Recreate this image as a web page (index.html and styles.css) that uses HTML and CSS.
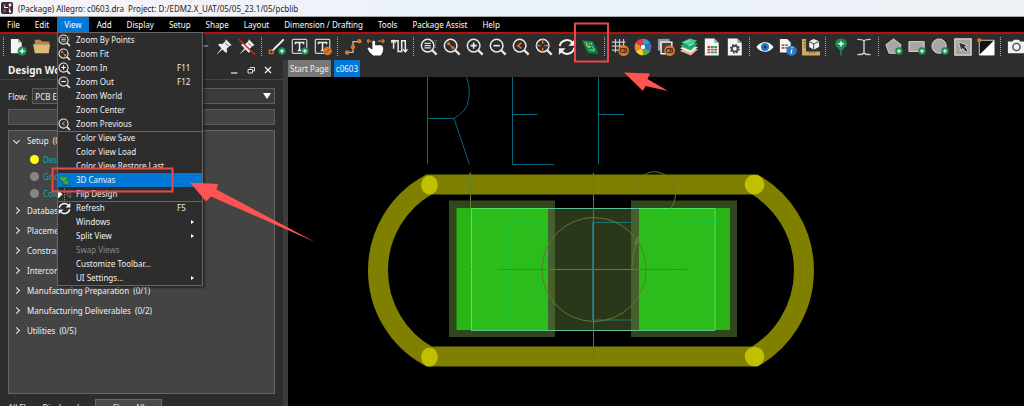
FILE: index.html
```html
<!DOCTYPE html>
<html lang="en">
<head>
  <meta charset="UTF-8" />
  <meta name="viewport" content="width=device-width, initial-scale=1.0"/>
  <title>(Package) Allegro: c0603.dra</title>
  <link rel="stylesheet" href="styles.css">
</head>
<body>

  <!-- shared icons -->
  <svg class="sprite" aria-hidden="true">
    <symbol id="plus-badge" viewBox="0 0 10 10">
      <circle cx="5" cy="5" r="4.6" fill="#1c8f50"/>
      <path d="M5 2.4v5.2M2.4 5h5.2" stroke="#fff" stroke-width="1.3"/>
    </symbol>
    <symbol id="orange-badge" viewBox="0 0 10 10">
      <circle cx="5" cy="5" r="5" fill="#d9782a"/>
      <rect x="2" y="3.2" width="6" height="3.6" rx="1.6" fill="none" stroke="#4a2a12"/>
      <circle cx="5.8" cy="5" r="1" fill="#4a2a12"/>
    </symbol>
    <symbol id="lens" viewBox="0 0 20 20">
      <circle cx="8.5" cy="8.5" r="7" fill="none" stroke="#e8e8e8" stroke-width="1.7"/>
      <path d="M13.6 13.6L18.5 18.5" stroke="#e8e8e8" stroke-width="2.6"/>
    </symbol>
    <symbol id="zoom-points" viewBox="0 0 20 20">
      <use href="#lens"/>
      <path d="M5 6h7M5 8.5h7M5 11h7" stroke="#ddd" stroke-width="1.2"/>
      <path d="M16 3h3M17 5.5h2M17 8h2M17 10.5h2" stroke="#aaa" stroke-dasharray="1 1"/>
    </symbol>
    <symbol id="zoom-fit" viewBox="0 0 20 20">
      <use href="#lens"/>
      <path d="M6 6l5 5" stroke="#d9782a" stroke-width="1.4"/>
      <path d="M4.8 4.8h3v3h-3zM9.5 9.5h3v3h-3z" fill="#d9782a"/>
    </symbol>
    <symbol id="zoom-in" viewBox="0 0 20 20">
      <use href="#lens"/>
      <path d="M8.5 5v7M5 8.5h7" stroke="#eee" stroke-width="1.8"/>
    </symbol>
    <symbol id="zoom-out" viewBox="0 0 20 20">
      <use href="#lens"/>
      <path d="M5 8.5h7" stroke="#eee" stroke-width="1.8"/>
    </symbol>
    <symbol id="zoom-prev" viewBox="0 0 20 20">
      <use href="#lens"/>
      <path d="M10.5 5.5l-4 3 4 3" fill="none" stroke="#d9782a" stroke-width="1.8"/>
    </symbol>
    <symbol id="zoom-center" viewBox="0 0 20 20">
      <use href="#lens"/>
      <path d="M8.5 1.5v5M8.5 10.5v5M1.5 8.5h5M10.5 8.5h5" stroke="#d9782a" stroke-width="1.6"/>
    </symbol>
    <symbol id="refresh" viewBox="0 0 20 20">
      <path d="M2 9A8 7.5 0 0 1 16 5M18 11A8 7.5 0 0 1 4 15" fill="none" stroke="#f2f2f2" stroke-width="2.2"/>
      <path d="M19 1v7.5h-7.500zM1 19v-7.5h7.5z" fill="#f2f2f2"/>
    </symbol>
    <symbol id="board" viewBox="0 0 20 20">
      <path d="M1 2.5L13 3.500l6.5 14-12-1z" fill="#16834a"/>
      <path d="M7.5 16.5l12 1v1l-12-1z" fill="#0b5a30"/>
      <path d="M4 5h3M8 6l4 1M6 8l3 3M12 9l3 4M9 13l4 1" stroke="#5fd08b" stroke-width="1.2"/>
      <path d="M8 8.5h2.5v2H8zM11 5h1.5v1.5H11z" fill="#d8cf4a"/>
      <path d="M5.5 6.5H7V8H5.500zM13 13h1.5v1.5H13z" fill="#b8e6d4"/>
    </symbol>
    <symbol id="flip" viewBox="0 0 20 20">
      <path d="M0 3l7 6.5L0 16z" fill="#fff"/>
      <path d="M10 1v18" stroke="#999" stroke-width="1.5" stroke-dasharray="2 2"/>
      <path d="M19 4l-6 5.5 6 5.5z" fill="none" stroke="#999"/>
    </symbol>
    <symbol id="page" viewBox="0 0 20 20">
      <path d="M2 .5h10.5l5 5v14H2z" fill="#f4f4f4"/>
      <path d="M12.5 .5v5h5z" fill="#aaa"/>
    </symbol>
    <symbol id="pushpin" viewBox="0 0 20 20">
      <path d="M12 1.5l6.5 6.5-2 .5-3.5 3.5.5 3.5-1.5 1-3.800-3.800L1.500 18.500 7.200 11.500 3.500 7.800l1.200-1.500 3.500.5L11.500 3.500z" fill="#eee"/>
      <path d="M11.5 5.5l3.5 3.5" stroke="#555"/>
    </symbol>
    <symbol id="text-box" viewBox="0 0 20 20">
      <rect x="1.5" y="1.5" width="16" height="15.5" rx="1" fill="none" stroke="#ccc" stroke-width="1.4"/>
      <path d="M5 7V5h9v2M9.500 5v9M7.500 14h4" fill="none" stroke="#eee" stroke-width="1.7"/>
    </symbol>
    <symbol id="table-page" viewBox="0 0 20 20">
      <use href="#page"/>
      <path d="M5 10h3M5 13h3M5 16h3M12.500 13h3" stroke="#d8303c" stroke-width="2"/>
      <path d="M8.800 10h3M12.500 10h3M8.800 13h3M8.800 16h3M12.500 16h3" stroke="#24935a" stroke-width="2"/>
    </symbol>
  </svg>

  <header class="title-bar">
    <svg class="app-icon" viewBox="0 0 12 12" aria-hidden="true">
      <rect width="12" height="12" rx="2" fill="#2b3040"/>
      <path d="M3.5 2v3.5h5V10M8.5 2.5v2M3.5 7.5V10" stroke="#fff" fill="none"/>
      <path d="M2 2h3v2H2zM7 5h3v2H7zM2 8h3v2H2z" fill="#d42a3f"/>
      <circle cx="9" cy="3" r="1.4" fill="#fff"/><circle cx="9" cy="9.5" r="1.2" fill="#fff"/>
    </svg>
    <span>(Package) Allegro: c0603.dra&nbsp; Project: D:/EDM2.X_UAT/05/05_23.1/05/pcblib</span>
  </header>

  <nav class="menu-bar">
    <button>File</button>
    <button>Edit</button>
    <button class="open" aria-expanded="true">View</button>
    <button>Add</button>
    <button>Display</button>
    <button>Setup</button>
    <button>Shape</button>
    <button>Layout</button>
    <button>Dimension / Drafting</button>
    <button>Tools</button>
    <button>Package Assist</button>
    <button>Help</button>
  </nav>

  <div class="toolbar" role="toolbar" aria-label="Tools">
    <span class="handle"></span>
    <button aria-label="New"><svg viewBox="0 0 20 20"><path d="M1 1h8l4 4v12H1z" fill="#f4f4f4"/><path d="M9 1v4h4z" fill="#999"/><use href="#plus-badge" x="8" y="9" width="11" height="11"/></svg></button>
    <button aria-label="Open"><svg viewBox="0 0 20 20"><path d="M2 2h6l2 2h8v3H2z" fill="#b98a4e"/><path d="M0 7h19l-1.5 10H2z" fill="#deb877"/></svg></button>
    <button aria-label="Save"><svg viewBox="0 0 20 20"><path d="M2 2h16v16H2z" fill="#eee"/></svg></button>
    <button aria-label="Move"></button>
    <button aria-label="Copy"></button>
    <button aria-label="Delete"></button>
    <button aria-label="Undo"></button>
    <button aria-label="Redo"></button>
    <span class="handle"></span>
    <span class="caret"></span>
    <button aria-label="Fix"><svg><use href="#pushpin"/></svg></button>
    <button aria-label="Unfix"><svg viewBox="0 0 20 20"><use href="#pushpin"/><path d="M1 1.5l18 17" stroke="#cf2630" stroke-width="1.6"/></svg></button>
    <span class="handle"></span>
    <button aria-label="Add line"><svg viewBox="0 0 20 20"><path d="M4 15L17.5 1.5" stroke="#f2f2f2" stroke-width="2.2"/><path d="M1.5 13.5h4v4h-4z" fill="#5a3010" stroke="#d9782a" stroke-width="1.3"/><use href="#plus-badge" x="11" y="10" width="9" height="9"/></svg></button>
    <button aria-label="Add text"><svg viewBox="0 0 20 20"><use href="#text-box"/><use href="#plus-badge" x="11" y="10" width="9" height="9"/></svg></button>
    <button aria-label="Edit text"><svg viewBox="0 0 20 20"><use href="#text-box"/><circle cx="15" cy="14.5" r="4.800" fill="#d9782a"/><path d="M12.500 17l5-5" stroke="#7a3c10"/></svg></button>
    <span class="handle"></span>
    <button aria-label="Route"><svg viewBox="0 0 20 20"><path d="M3 16h7V4h7" fill="none" stroke="#bbb" stroke-width="1.5"/><circle cx="3.5" cy="16" r="2.5" fill="#d9782a"/><circle cx="10" cy="10" r="2.5" fill="#d9782a"/><circle cx="17" cy="3.5" r="2.5" fill="#d9782a"/></svg></button>
    <button aria-label="Slide"><svg viewBox="0 0 20 20"><path d="M7 19.5c-2-2-5-4-6.5-8.5l2-.5L6 13V4.500c0-2 3-2 3 0V8h6c2 0 3 1.500 3 3.500 0 3-1 6-3 8z" fill="#fff"/><path d="M0 3.500h5M12 3.500h7M2 1.500l-2 2 2 2M17 1.500l2 2-2 2" fill="none" stroke="#d9782a" stroke-width="1.5"/></svg></button>
    <button aria-label="Delay tune"><svg viewBox="0 0 20 20"><path d="M4 12V3M1 3h8v12h4V3h4v12" fill="none" stroke="#e8e8e8" stroke-width="1.7"/><path d="M1.5 5.500L4 2.500l2.500 3M14.500 12.500l2.500 3 2.500-3" fill="none" stroke="#e8e8e8" stroke-width="1.4"/></svg></button>
    <span class="handle"></span>
    <button aria-label="Zoom By Points"><svg><use href="#zoom-points"/></svg></button>
    <button aria-label="Zoom Fit"><svg><use href="#zoom-fit"/></svg></button>
    <button aria-label="Zoom In"><svg><use href="#zoom-in"/></svg></button>
    <button aria-label="Zoom Out"><svg><use href="#zoom-out"/></svg></button>
    <button aria-label="Zoom Previous"><svg><use href="#zoom-prev"/></svg></button>
    <button aria-label="Zoom Center"><svg><use href="#zoom-center"/></svg></button>
    <button aria-label="Refresh"><svg><use href="#refresh"/></svg></button>
    <button aria-label="3D Canvas"><svg><use href="#board"/></svg></button>
    <span class="handle"></span>
    <button aria-label="Grid"><svg viewBox="0 0 20 20"><path d="M5 1v15M9.500 1v15M14 1v9M1 4.500h15M1 9h15M1 13.500h9" stroke="#ccc" stroke-width="1.3"/><use href="#orange-badge" x="8" y="8" width="12" height="12"/></svg></button>
    <button aria-label="Color"><svg viewBox="-10 -10 20 20"><g fill="none" stroke-width="6.5"><path d="M0-6A6 6 0 0 1 5.200-3" stroke="#2f9fd0"/><path d="M5.200-3A6 6 0 0 1 5.200 3" stroke="#3a6fd0"/><path d="M5.200 3A6 6 0 0 1 0 6" stroke="#4fb04c"/><path d="M0 6A6 6 0 0 1-5.200 3" stroke="#f4cf3a"/><path d="M-5.200 3A6 6 0 0 1-5.200-3" stroke="#f08a28"/><path d="M-5.200-3A6 6 0 0 1 0-6" stroke="#e03a48"/></g><circle r="2.6" fill="#f6f6f6"/></svg></button>
    <button aria-label="Shadow"><svg viewBox="0 0 20 20"><path d="M1 1h13v13H1z" fill="#999"/><path d="M4.500 4.500h12v13h-12z" fill="#444" stroke="#fff" stroke-width="1.5"/><use href="#orange-badge" x="8" y="8" width="12" height="12"/></svg></button>
    <button aria-label="Layers"><svg viewBox="0 0 20 20"><path d="M0 14.500L7 10l13 2.500-8 7z" fill="#f0b48c"/><path d="M0 11.500L7 8l13 2-8 6.500z" fill="#eee"/><path d="M0 9l7-5 13 2-8 8z" fill="#20a56d"/><path d="M1 5l10-4.500L19 3l-7 5.500z" fill="#3fcf94"/><path d="M5 5l6-2M9 9l6-3" stroke="#bff0d8"/></svg></button>
    <button aria-label="Report"><svg><use href="#table-page"/></svg></button>
    <button aria-label="Parameters"><svg viewBox="0 0 20 20"><use href="#page"/><circle cx="9.8" cy="12" r="3.2" fill="none" stroke="#444" stroke-width="2"/><circle cx="9.8" cy="12" r="4.6" fill="none" stroke="#444" stroke-width="1.8" stroke-dasharray="1.8 1.81"/></svg></button>
    <span class="handle"></span>
    <button aria-label="Show"><svg viewBox="0 0 20 20"><path d="M.5 10C5 3 15 3 19.500 10 15 17 5 17 .5 10z" fill="#fff"/><circle cx="10" cy="10" r="4.5" fill="#2f78c4"/><circle cx="10" cy="10" r="1.8" fill="#173a66"/></svg></button>
    <button aria-label="Info"><svg viewBox="0 0 20 20"><path d="M1 1h8l4 4v11H1z" fill="#f4f4f4"/><path d="M3 8h3M3 11h3" stroke="#d8303c" stroke-width="1.8"/><path d="M7 8h3M7 11h3" stroke="#24935a" stroke-width="1.8"/><circle cx="14" cy="14" r="5.8" fill="#2f78c4"/><path d="M14.500 10v1.500M14.200 13l-.7 4" stroke="#fff" stroke-width="1.4"/></svg></button>
    <button aria-label="Measure"><svg viewBox="0 0 20 20"><path d="M0 1h4.500v14H20v4.500H0z" fill="#d6a75f"/><path d="M2 4h2M2 7h2M2 10h2M8 15v2M11 15v2M14 15v2" stroke="#6b4b1c"/><path d="M13 1l6 2.500v6.500l-6 3-5-3V3.500z" fill="#eee"/><path d="M8 4l5 2.500L19 4M13 6.500V13" fill="none" stroke="#333"/></svg></button>
    <span class="handle"></span>
    <button aria-label="Add pin"><svg viewBox="0 0 20 20"><path d="M10 12v7.500" stroke="#1c8f50" stroke-width="1.5"/><path d="M10 15C8 12 3.500 10 3.500 6.500a6.500 6 0 0 1 13 0C16.500 10 12 12 10 15z" fill="#1c8f50"/><path d="M10 3.500v6M7 6.500h6" stroke="#fff" stroke-width="1.7"/></svg></button>
    <button aria-label="Text size"><svg viewBox="0 0 20 20"><path d="M2.500 1.500c4 0 6.500 0 7.500 2 1-2 3.500-2 7.500-2M2.500 18.500c4 0 6.500 0 7.500-2 1 2 3.500 2 7.500 2M10 3v14" fill="none" stroke="#ccc" stroke-width="1.6"/></svg></button>
    <span class="handle"></span>
    <button aria-label="Add polygon"><svg viewBox="0 0 20 20"><path d="M9.500 1L18 7.500 15 17H4.500L1 7.500z" fill="#aaa6a3" stroke="#ddd"/><use href="#plus-badge" x="11" y="10" width="9" height="9"/></svg></button>
    <button aria-label="Add rectangle"><svg viewBox="0 0 20 20"><path d="M1 4h17v11H1z" fill="#aaa6a3" stroke="#ddd"/><use href="#plus-badge" x="11" y="10" width="9" height="9"/></svg></button>
    <button aria-label="Add circle"><svg viewBox="0 0 20 20"><circle cx="9" cy="9" r="8" fill="#aaa6a3" stroke="#ddd"/><use href="#plus-badge" x="11" y="10" width="9" height="9"/></svg></button>
    <button aria-label="Select shape"><svg viewBox="0 0 20 20"><path d="M1 1h18v18H1z" fill="#a5a2a0" stroke="#ddd" stroke-width="1.5"/><path d="M5 4.500l10 3.500-3 1.500 3.500 4-2 2-4-4-1.500 3z" fill="#333" stroke="#eee" stroke-width=".8"/></svg></button>
    <button aria-label="Void shape"><svg viewBox="0 0 20 20"><path d="M2.500 2.500h16.500v16.500H2.500z" fill="#111" stroke="#ddd"/><path d="M19 2.500V19H2.500z" fill="#fff"/><path d="M.5 .5h4v4h-4z" fill="#d9782a"/></svg></button>
    <span class="handle"></span>
    <button aria-label="Snapshot"><svg viewBox="0 0 20 20"><path d="M1 4h5l2-2h5l2 2h5v13H1z" fill="#f2f2f2"/><circle cx="10.5" cy="10" r="4" fill="none" stroke="#444" stroke-width="1.5"/></svg></button>
  </div>

  <main class="workspace">
    <aside class="dock">
      <div class="dock-title">
        <h1>Design Workflow</h1>
        <button aria-label="Minimize"><svg viewBox="0 0 8 8"><path d="M1 7h6.500" stroke="#ddd" stroke-width="1.3"/></svg></button>
        <button aria-label="Float"><svg viewBox="0 0 8 8"><path d="M3 2.500V1.500h4.500V5H6M1 3.500h4.500V7H1z" fill="none" stroke="#ddd"/></svg></button>
        <button aria-label="Close"><svg viewBox="0 0 8 8"><path d="M1 1l6 6M7 1L1 7" stroke="#eee" stroke-width="1.3"/></svg></button>
      </div>
      <div class="dock-body">
        <div class="flow-row">
          <label for="flow">Flow:</label>
          <div class="select-wrap">
            <select id="flow"><option>PCB Editor</option></select>
          </div>
        </div>
        <button class="wide-button" aria-label="Edit flow"></button>
        <ul class="tree">
          <li class="expanded">Setup&nbsp; (0/3)
            <ul>
              <li class="current"><a href="#">Design Parameters</a></li>
              <li><a href="#">Grids</a></li>
              <li><a href="#">Colors</a></li>
            </ul>
          </li>
          <li>Database Preparation&nbsp; (0/4)</li>
          <li>Placement&nbsp; (0/2)</li>
          <li>Constraints&nbsp; (0/3)</li>
          <li>Interconnect&nbsp; (0/3)</li>
          <li>Manufacturing Preparation&nbsp; (0/1)</li>
          <li>Manufacturing Deliverables&nbsp; (0/2)</li>
          <li>Utilities&nbsp; (0/5)</li>
        </ul>
        <div class="dock-footer">
          <span>All Flows Displayed:</span>
          <button>Show All</button>
        </div>
      </div>
    </aside>

    <section class="editor">
      <div class="tabs">
        <button>Start Page</button>
        <button class="active">c0603</button>
      </div>
      <svg class="canvas" viewBox="288 77 736 329" preserveAspectRatio="xMinYMin slice">
        <!-- reference text, top -->
        <g class="ref-text">
          <path d="M427.5 77v87.5M427.5 118.5H454L469.500 164.500M454 118.500C463 113 466 108 467.500 104C470 93 470 88 466.500 77"/>
          <path d="M512.5 77v87.5h41.5M512.500 114.500H537.500"/>
          <path d="M598.5 77v87.5M598.500 114.500H624"/>
        </g>
        <!-- pads and body -->
        <path class="mask" d="M449 200.500h106v136.500H449zM631 200.500h106v136.500H631z"/>
        <path class="body-fill" d="M471 208h244v122.500H471z"/>
        <path class="mask-overlap" d="M548 208h7v122.500h-7zM631 208h8v122.500h-8z"/>
        <path class="pad" d="M456.500 208H548v122h-91.500zM639 208h91v122h-91z"/>
        <path class="pad-overlap" d="M471 208h77v122h-77zM639 208h76v122h-76z"/>
        <path class="body-line" d="M548 208.500h91M471 330.500h244"/>
        <path class="body-line bright" d="M548 208.500h-76.500v121.500M639 208.500h76v121.500"/>
        <!-- keepout outline -->
        <path class="outline" d="M429 184.500H755A100 100 0 0 1 755 356.500H429A98 98 0 0 1 429 184.500z"/>
        <g class="vertex">
          <ellipse cx="429.500" cy="185" rx="8.300" ry="9.500"/>
          <ellipse cx="429.500" cy="357" rx="8.300" ry="9.500"/>
          <circle cx="754.500" cy="184.500" r="9.800"/>
          <circle cx="754.500" cy="356.500" r="9.800"/>
        </g>
        <!-- assembly text -->
        <g class="green-text">
          <path d="M508.500 319v-96.500H535Q545 226 548 233M508.500 273.500H534L548 262M534 273.500L548 314M679.500 319v-96.500H719M679.500 269.500H704M459 269.500h26"/>
          <path d="M671 208C655 222 640 228 635 245"/>
        </g>
        <path class="teal-text" d="M548 233Q551 245 548 260M548 314l2 5M635 222.500H592.500V320H635"/>
        <g class="cross">
          <path d="M593.500 172.500V364M498 269.500H689M470.500 172.500V208M470.500 172.500L459 190"/>
          <circle cx="594" cy="269.500" r="52"/>
          <path d="M634 189C641 171 655 168 667 176C678 186 677 200 671 208M638 240C634 248 632 258 632 269"/>
        </g>
      </svg>
    </section>
  </main>

  <div class="dropdown" role="menu" aria-label="View">
    <button><svg><use href="#zoom-points"/></svg><span>Zoom By Points</span></button>
    <button><svg><use href="#zoom-fit"/></svg><span>Zoom Fit</span></button>
    <button><svg><use href="#zoom-in"/></svg><span>Zoom In</span><kbd>F11</kbd></button>
    <button><svg><use href="#zoom-out"/></svg><span>Zoom Out</span><kbd>F12</kbd></button>
    <button><i></i><span>Zoom World</span></button>
    <button><i></i><span>Zoom Center</span></button>
    <button><svg><use href="#zoom-prev"/></svg><span>Zoom Previous</span></button>
    <hr>
    <button><i></i><span>Color View Save</span></button>
    <button><i></i><span>Color View Load</span></button>
    <button><i></i><span>Color View Restore Last</span></button>
    <hr>
    <button class="selected"><svg><use href="#board"/></svg><span>3D Canvas</span></button>
    <button><svg><use href="#flip"/></svg><span>Flip Design</span></button>
    <hr>
    <button><svg><use href="#refresh"/></svg><span>Refresh</span><kbd>F5</kbd></button>
    <button class="submenu"><i></i><span>Windows</span></button>
    <button class="submenu"><i></i><span>Split View</span></button>
    <button disabled><i></i><span>Swap Views</span></button>
    <button><i></i><span>Customize Toolbar...</span></button>
    <button class="submenu"><i></i><span>UI Settings...</span></button>
  </div>

  <!-- callouts -->
  <svg class="callouts" viewBox="0 0 1024 406" aria-hidden="true">
    <rect x="575" y="23.5" width="33" height="38"/>
    <rect x="52.5" y="168.5" width="120" height="23"/>
    <path d="M624 72.500L650 73.500L647.500 79L668 91L645.500 86L643 91z"/>
    <path d="M190 182.500L218 184L216.500 189.500L315 242L211 196.500L206 201.500z"/>
  </svg>

</body>
</html>
```
FILE: styles.css
```css
* {
  box-sizing: border-box;
}

body {
  margin: 0;
  height: 100vh;
  display: flex;
  flex-direction: column;
  overflow: hidden;
  position: relative;
  background: #2d2d2d;
  color: #f0f0f0;
  font-family: "Noto Sans", "Open Sans", sans-serif;
  font-size: 8px;
}

button {
  font: inherit;
  color: inherit;
  background: none;
  border: none;
  padding: 0;
  margin: 0;
  cursor: pointer;
}

.sprite {
  position: absolute;
  width: 0;
  height: 0;
}

/* title and menus */
.title-bar {
  flex: none;
  display: flex;
  align-items: center;
  gap: 5px;
  height: 17px;
  padding-left: 1px;
  background: linear-gradient(to right, #f6f3f6, #eaf2fa 50%, #eef2f6);
  border-bottom: 1px solid #a8a8a8;
  color: #222;
}

.app-icon {
  width: 12px;
  height: 12px;
}

.menu-bar {
  flex: none;
  display: flex;
  gap: 1px;
  height: 15px;
  background: #000;
  color: #fff;
}

.menu-bar button {
  padding: 0 7px;
}

.menu-bar .open {
  background: #0078d7;
}

/* toolbar */
.toolbar {
  flex: none;
  display: flex;
  align-items: center;
  height: 28px;
  border-top: 2px solid #b50f0f;
  overflow: hidden;
}

.toolbar button {
  flex: none;
  width: 23px;
  height: 20px;
}

.toolbar svg {
  display: block;
  width: 18px;
  height: 18px;
  margin: 0 auto;
}

.handle {
  flex: none;
  width: 7px;
  height: 20px;
  background: repeating-linear-gradient(#b0b0b0 0 1px, #2d2d2d 1px 2px) center / 1px 100% no-repeat;
}

.caret {
  flex: none;
  width: 14px;
}

.caret::before {
  content: "";
  display: block;
  width: 4px;
  margin: 0 auto;
  border: 2px solid transparent;
  border-top-color: #777;
}

/* workflow panel */
.workspace {
  flex: 1;
  min-height: 0;
  display: flex;
}

.dock {
  flex: none;
  width: 288px;
  border-right: 5px solid #3c3c3c;
  overflow: hidden;
}

.dock-title {
  display: flex;
  align-items: center;
  gap: 9px;
  height: 20px;
  padding: 0 11px 0 8px;
  border-bottom: 1px solid #444;
}

.dock-title h1 {
  flex: 1;
  margin: 0;
  font-size: 10px;
}

.dock-title button {
  width: 8px;
  height: 8px;
}

.dock-title svg {
  display: block;
}

.dock-body {
  display: flex;
  flex-direction: column;
  gap: 5px;
  padding: 8px 8px 0;
}

.flow-row {
  display: flex;
  align-items: center;
  gap: 5px;
}

.select-wrap {
  flex: 1;
  position: relative;
}

.select-wrap::after {
  content: "";
  position: absolute;
  right: 4px;
  top: 5px;
  border: 4px solid transparent;
  border-top: 6px solid #fff;
  border-bottom: none;
}

.flow-row select {
  appearance: none;
  display: block;
  width: 100%;
  height: 16px;
  padding: 0 2px;
  border: 1px solid #5c5c5c;
  background: #3a3a3a;
  color: inherit;
  font: inherit;
}

.wide-button {
  height: 16px;
  background: #444;
  border: 1px solid #5c5c5c;
}

.tree {
  height: 264px;
  margin: 0;
  padding: 0 0 0 5px;
  list-style: none;
  background: #444;
  border: 1px solid #666;
}

.tree > li {
  position: relative;
  padding-left: 13px;
  line-height: 20px;
}

.tree > li::before {
  content: "";
  position: absolute;
  left: 0;
  top: 7px;
  width: 4px;
  height: 4px;
  border: solid #eee;
  border-width: 1px 1px 0 0;
  transform: rotate(45deg);
}

.tree > li.expanded::before {
  transform: rotate(135deg);
}

.tree ul {
  margin: 0 0 -1px;
  padding: 0 0 0 3px;
  list-style: none;
}

.tree ul li {
  display: flex;
  align-items: center;
  gap: 4px;
  line-height: 17px;
}

.tree ul li::before {
  content: "";
  width: 9px;
  height: 9px;
  border-radius: 50%;
  background: #858585;
}

.tree ul .current::before {
  background: #ff0;
}

.tree a {
  color: #12a5b5;
  text-decoration: none;
}

.dock-footer {
  display: flex;
  align-items: center;
  gap: 14px;
}

.dock-footer button {
  width: 67px;
  height: 17px;
  border: 1px solid #6a6a6a;
  background: #4a4a4a;
}

/* editor */
.editor {
  flex: 1;
  min-width: 0;
  display: flex;
  flex-direction: column;
}

.tabs {
  flex: none;
  display: flex;
  gap: 3px;
  height: 17px;
}

.tabs button {
  padding: 0 2px;
  background: #777;
}

.tabs .active {
  background: #0078d7;
}

.canvas {
  flex: 1;
  min-height: 0;
  width: 100%;
  background: #000;
  fill: none;
}

.ref-text { stroke: #056a82; }
.mask { fill: #30461c; }
.body-fill { fill: #2a371a; }
.mask-overlap { fill: #46602a; }
.pad { fill: #28b515; }
.pad-overlap { fill: #2cbc1c; }
.body-line { stroke: #5cc09a; }
.body-line.bright { stroke: #4ce85a; }
.outline { stroke: #808000; stroke-width: 20; }
.vertex { fill: #c0c000; }
.green-text { stroke: #1cc43c; }
.teal-text { stroke: #267272; }
.cross { stroke: #5a7c34; }

/* view menu */
.dropdown {
  position: absolute;
  left: 57px;
  top: 32px;
  width: 146px;
  background: #2d2d2d;
  border: 1px solid #666;
  box-shadow: 2px 2px 2px rgba(0, 0, 0, 0.4);
}

.dropdown button {
  display: flex;
  align-items: center;
  gap: 5px;
  width: 100%;
  height: 14px;
  padding: 0 11px 0 0;
  text-align: left;
  line-height: 14px;
}

.dropdown svg,
.dropdown i {
  flex: none;
  width: 13px;
  height: 13px;
}

.dropdown span {
  flex: 1;
}

.dropdown kbd {
  font: inherit;
  min-width: 14px;
}

.dropdown hr {
  margin: 0 0 -1px;
  border: none;
  border-top: 1px solid #666;
}

.dropdown .selected {
  background: #0078d7;
}

.dropdown button:disabled {
  color: #888;
}

.dropdown .submenu {
  padding-right: 8px;
}

.submenu::after {
  content: "";
  border: 2px solid transparent;
  border-left: 3px solid #fff;
  border-right: none;
}

/* callouts */
.callouts {
  position: absolute;
  left: 0;
  top: 0;
  width: 1024px;
  height: 406px;
  pointer-events: none;
  fill: #ff5252;
}

.callouts rect {
  fill: none;
  stroke: #e8484c;
  stroke-width: 2;
}
```
